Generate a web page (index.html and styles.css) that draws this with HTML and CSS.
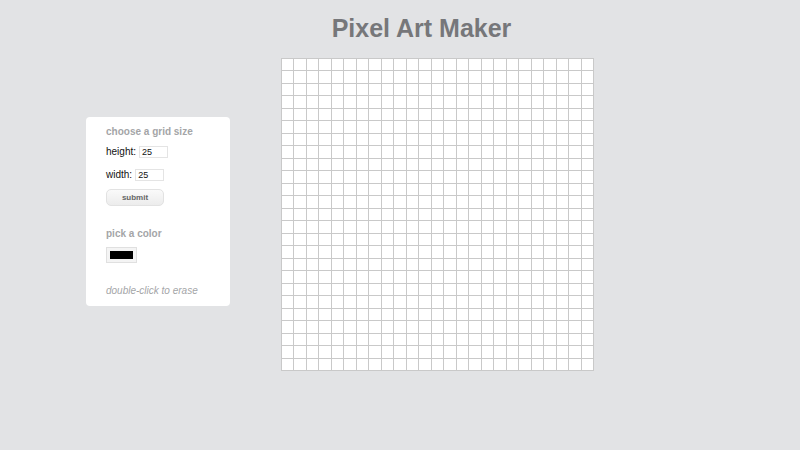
FILE: index.html
```html
<!DOCTYPE html>
<html>
<head>
<meta charset="utf-8">
<link rel="stylesheet" href="styles.css">
</head>
<body>
<h1 class="title">Pixel Art Maker</h1>
<div class="layout">
  <aside class="panel">
    <h2 class="heading">choose a grid size</h2>
    <form class="size-form">
      <label class="field">height: <input class="num" type="text" value="25"></label>
      <label class="field">width: <input class="num" type="text" value="25"></label>
      <button class="submit" type="button">submit</button>
    </form>
    <h2 class="heading pick">pick a color</h2>
    <div class="swatch"><span class="swatch-fill"></span></div>
    <p class="hint">double-click to erase</p>
  </aside>
  <div class="canvas" id="canvas"></div>
</div>
<script>
  var c = document.getElementById('canvas');
  for (var i = 0; i < 625; i++) {
    var d = document.createElement('div');
    d.className = 'cell';
    c.appendChild(d);
  }
</script>
</body>
</html>
```
FILE: styles.css
```css
* { box-sizing: border-box; }
html, body { margin: 0; padding: 0; }
body {
  background: #e2e3e5;
  font-family: "Liberation Sans", Arial, sans-serif;
  width: 800px;
  height: 450px;
  overflow: hidden;
}
.title {
  margin: 0;
  padding: 14px 0 0 43px;
  text-align: center;
  font-size: 25px;
  line-height: 29px;
  font-weight: bold;
  color: #76777a;
}
.layout {
  display: flex;
  align-items: flex-start;
  padding-top: 15px;
}
.panel {
  margin: 59px 0 0 86px;
  width: 144px;
  height: 189px;
  background: #fff;
  border-radius: 4px;
  padding: 9px 20px 0 20px;
}
.heading {
  margin: 0;
  font-size: 10px;
  line-height: 12px;
  font-weight: bold;
  color: #a4a5a7;
}
.size-form {
  display: flex;
  flex-direction: column;
  align-items: flex-start;
}
.field {
  display: flex;
  align-items: center;
  font-size: 10px;
  color: #111;
  height: 13px;
  margin-top: 7px;
}
.field + .field { margin-top: 10px; }
.num {
  margin-left: 3px;
  width: 29px;
  height: 12px;
  border: 1px solid #e4e4e4;
  font-family: "Liberation Sans", Arial, sans-serif;
  font-size: 9px;
  padding: 0 2px;
  color: #111;
}
.submit {
  margin-top: 8px;
  width: 58px;
  height: 17px;
  border: 1px solid #e2e2e2;
  border-radius: 5px;
  background: linear-gradient(#fafafa, #ececec);
  font-family: "Liberation Sans", Arial, sans-serif;
  font-size: 8px;
  font-weight: bold;
  color: #666;
  padding: 0;
}
.pick { margin-top: 22px; }
.swatch {
  margin-top: 7px;
  width: 31px;
  height: 16px;
  border: 1px solid #e0e0e0;
  padding: 3px 3px;
  background: #f4f4f4;
}
.swatch-fill {
  display: block;
  width: 100%;
  height: 100%;
  background: #000;
}
.hint {
  margin: 22px 0 0;
  font-size: 10px;
  font-style: italic;
  color: #a4a5a7;
}
.canvas {
  margin-left: 51px;
  width: 313px;
  height: 313px;
  display: grid;
  grid-template-columns: repeat(25, 1fr);
  grid-template-rows: repeat(25, 1fr);
  background: #fff;
  border-top: 1px solid #c9c9c9;
  border-left: 1px solid #c9c9c9;
}
.cell {
  border-right: 1px solid #c9c9c9;
  border-bottom: 1px solid #c9c9c9;
}
```
